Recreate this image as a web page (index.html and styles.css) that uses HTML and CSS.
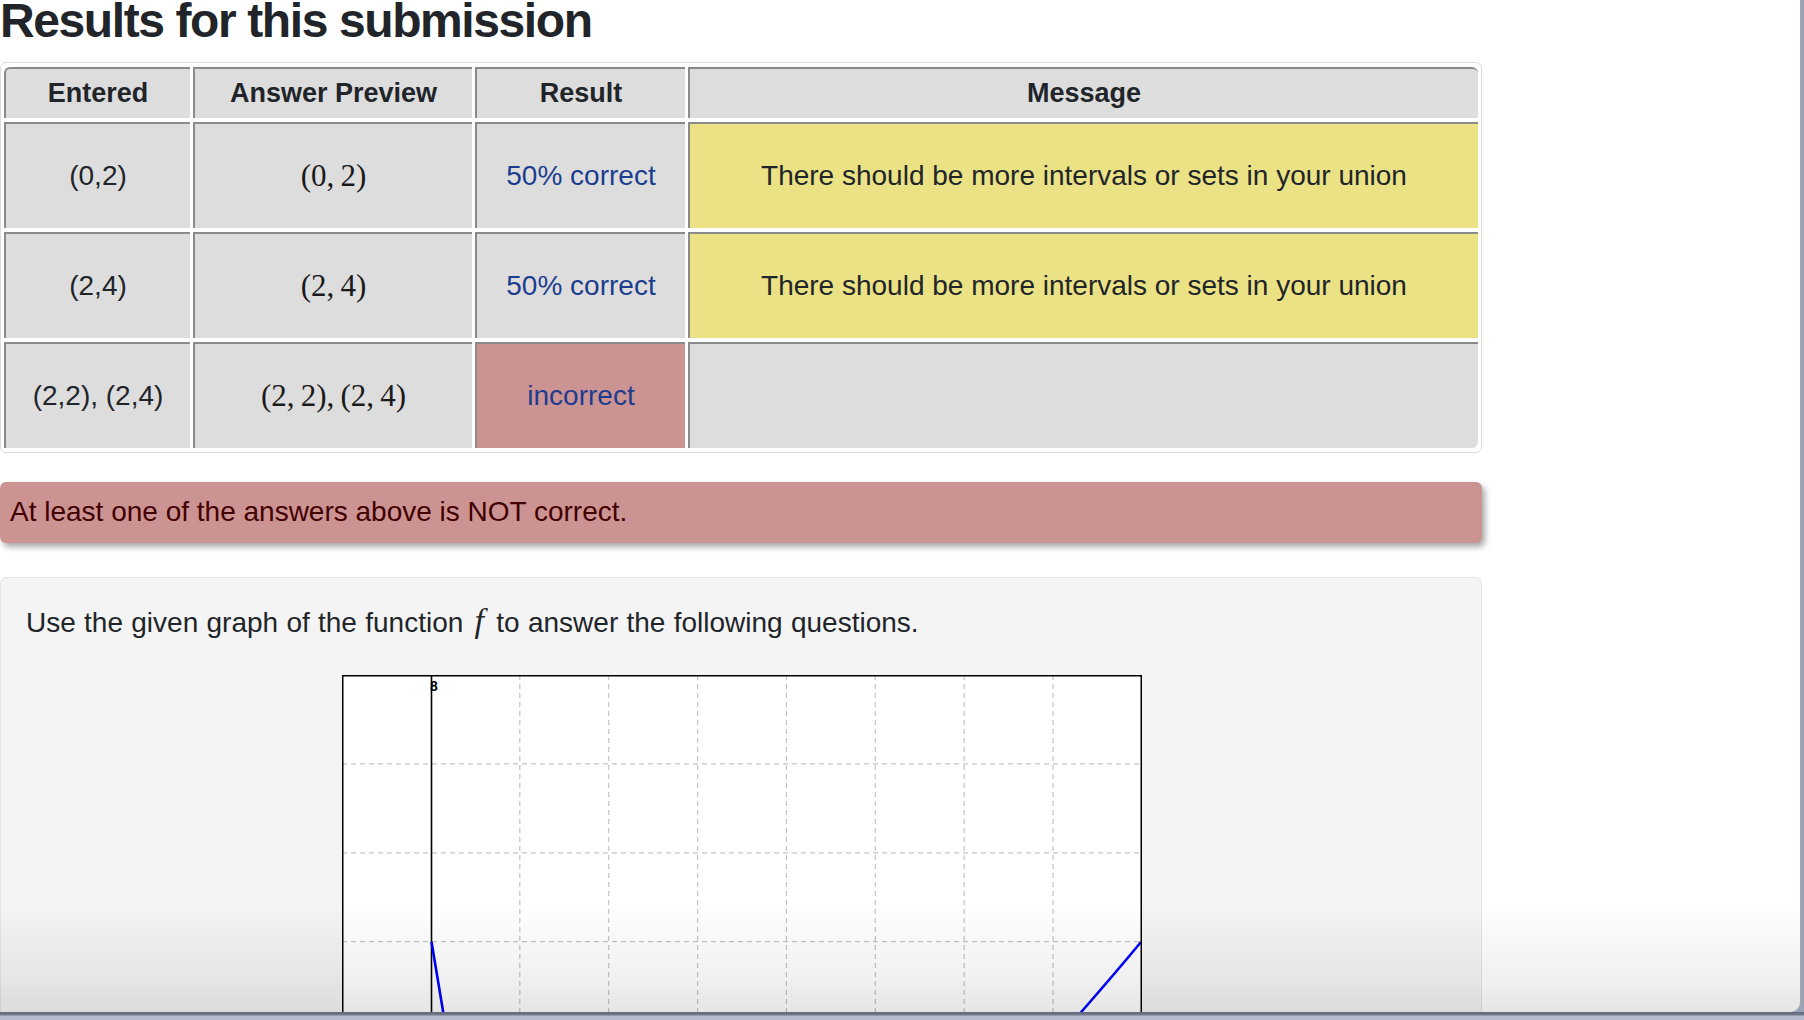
FILE: index.html
```html
<!DOCTYPE html>
<html lang="en">
<head>
<meta charset="utf-8">
<title>Results for this submission</title>
<link rel="stylesheet" href="styles.css">
</head>
<body>
<div class="window">
  <div class="page">
    <h1 class="title">Results for this submission</h1>
    <div class="results-wrap">
      <table class="attempt">
        <colgroup>
          <col class="c1"><col class="c2"><col class="c3"><col class="c4">
        </colgroup>
        <thead>
          <tr><th>Entered</th><th>Answer Preview</th><th>Result</th><th>Message</th></tr>
        </thead>
        <tbody>
          <tr>
            <td>(0,2)</td>
            <td><span class="math">(0,&#8201;2)</span></td>
            <td class="res">50% correct</td>
            <td class="msg warn">There should be more intervals or sets in your union</td>
          </tr>
          <tr>
            <td>(2,4)</td>
            <td><span class="math">(2,&#8201;4)</span></td>
            <td class="res">50% correct</td>
            <td class="msg warn">There should be more intervals or sets in your union</td>
          </tr>
          <tr>
            <td>(2,2), (2,4)</td>
            <td><span class="math">(2,&#8201;2),&#8201;(2,&#8201;4)</span></td>
            <td class="res bad">incorrect</td>
            <td class="msg"></td>
          </tr>
        </tbody>
      </table>
    </div>

    <div class="alert">At least one of the answers above is NOT correct.</div>

    <div class="problem">
      <p class="prompt">Use the given graph of the function <span class="mvar">f</span> to answer the following questions.</p>
      <div class="graph">
        <svg width="800" height="800" viewBox="0 0 800 800" xmlns="http://www.w3.org/2000/svg">
          <rect x="0" y="0" width="800" height="800" fill="#ffffff"/>
          <g stroke="#c4c4c4" stroke-width="1.2" stroke-dasharray="5 4" fill="none">
            <line x1="177.8" y1="0" x2="177.8" y2="800"/>
            <line x1="266.7" y1="0" x2="266.7" y2="800"/>
            <line x1="355.6" y1="0" x2="355.6" y2="800"/>
            <line x1="444.4" y1="0" x2="444.4" y2="800"/>
            <line x1="533.3" y1="0" x2="533.3" y2="800"/>
            <line x1="622.2" y1="0" x2="622.2" y2="800"/>
            <line x1="711.1" y1="0" x2="711.1" y2="800"/>
            <line x1="0" y1="88.9" x2="800" y2="88.9"/>
            <line x1="0" y1="177.8" x2="800" y2="177.8"/>
            <line x1="0" y1="266.7" x2="800" y2="266.7"/>
            <line x1="0" y1="355.6" x2="800" y2="355.6"/>
            <line x1="0" y1="444.4" x2="800" y2="444.4"/>
          </g>
          <line x1="89.5" y1="0" x2="89.5" y2="800" stroke="#000" stroke-width="1.6"/>
          <text x="88" y="16" class="tick">8</text>
          <path d="M89.5 266.7 L101 336 L112 410" stroke="#0000ff" stroke-width="2.6" fill="none"/>
          <path d="M799 267 Q775 296 741 335 T 690 400" stroke="#0000ff" stroke-width="2.6" fill="none"/>
          <rect x="0.75" y="0.75" width="798.5" height="798.5" fill="none" stroke="#000" stroke-width="1.5"/>
        </svg>
      </div>
    </div>
  </div>
  <div class="shade"></div>
</div>
</body>
</html>
```

FILE: styles.css
```css
html, body {
  margin: 0;
  padding: 0;
}

body {
  width: 1804px;
  height: 1020px;
  overflow: hidden;
  font-family: "Liberation Sans", Arial, sans-serif;
  color: #212529;
  background: linear-gradient(to bottom, #9aa2b8 0, #9aa2b8 1012px, #626878 1012px, #737a8c 1015px, #b5bcd0 1016px, #b5bcd0 1020px);
}

.window {
  position: relative;
  width: 1800px;
  height: 1012px;
  background: #ffffff;
  border-right: 1px solid #a4a6ab;
  border-bottom-right-radius: 10px;
  overflow: hidden;
}

.page {
  width: 1482px;
}

.title {
  margin: 0 0 20px 0;
  font-size: 48px;
  line-height: 42px;
  font-weight: 700;
  letter-spacing: -1.4px;
  color: #212529;
}

.results-wrap {
  border: 1px solid #dcdcdc;
  border-radius: 6px;
}

.attempt {
  table-layout: fixed;
  width: 1480px;
  border-collapse: separate;
  border-spacing: 3px 4px;
  font-size: 28px;
}

.attempt col.c1 { width: 186px; }
.attempt col.c2 { width: 279px; }
.attempt col.c3 { width: 210px; }
.attempt col.c4 { width: 790px; }

.attempt th,
.attempt td {
  box-sizing: border-box;
  background: #dddddd;
  border-top: 2px solid #8a8a8a;
  border-left: 2px solid #8a8a8a;
  border-right: 0;
  border-bottom: 0;
  text-align: center;
  vertical-align: middle;
  padding: 0 4px;
  white-space: nowrap;
}

.attempt th {
  height: 51px;
  font-size: 27px;
  font-weight: 700;
  color: #212529;
}

.attempt thead th:first-child {
  border-top-left-radius: 6px;
}

.attempt thead th:last-child {
  border-top-right-radius: 6px;
}

.attempt tbody tr:last-child td:last-child {
  border-bottom-right-radius: 6px;
}

.attempt td {
  height: 106px;
  color: #212529;
}

.math {
  font-family: "Liberation Serif", "Times New Roman", serif;
  font-size: 31px;
  color: #1a1a1a;
}

.attempt td.res {
  color: #1c3d8f;
}

.attempt td.bad {
  background: #cc9393;
}

.attempt td.warn {
  background: #ebe285;
}

.alert {
  margin-top: 29px;
  height: 61px;
  box-sizing: border-box;
  padding: 9px 10px 10px 10px;
  font-size: 28px;
  line-height: 42px;
  color: #420000;
  background: #cc9393;
  border-radius: 6px;
  box-shadow: 3px 4px 6px rgba(0, 0, 0, 0.35);
}

.problem {
  margin-top: 34px;
  background: #f4f4f4;
  border: 1px solid #e4e4e4;
  border-radius: 6px;
  padding: 24px 24px 40px 25px;
  height: 800px;
}

.prompt {
  margin: 0;
  font-size: 28px;
  line-height: 42px;
  color: #212529;
  word-spacing: 0.5px;
}

.mvar {
  display: inline-block;
  padding: 0 4px 0 3px;
  font-family: "Liberation Serif", "Times New Roman", serif;
  font-style: italic;
  font-size: 34px;
  line-height: 30px;
}

.graph {
  width: 800px;
  height: 800px;
  margin: 31px auto 0 auto;
}

.graph svg {
  display: block;
}

.tick {
  font-family: "Liberation Sans", Arial, sans-serif;
  font-size: 14px;
  font-weight: 700;
  fill: #000;
}

.shade {
  position: absolute;
  left: 0;
  right: 0;
  bottom: 0;
  height: 110px;
  background: linear-gradient(to bottom, rgba(0, 0, 0, 0) 0, rgba(0, 0, 0, 0.06) 70%, rgba(0, 0, 0, 0.1) 100%);
  pointer-events: none;
}
```
